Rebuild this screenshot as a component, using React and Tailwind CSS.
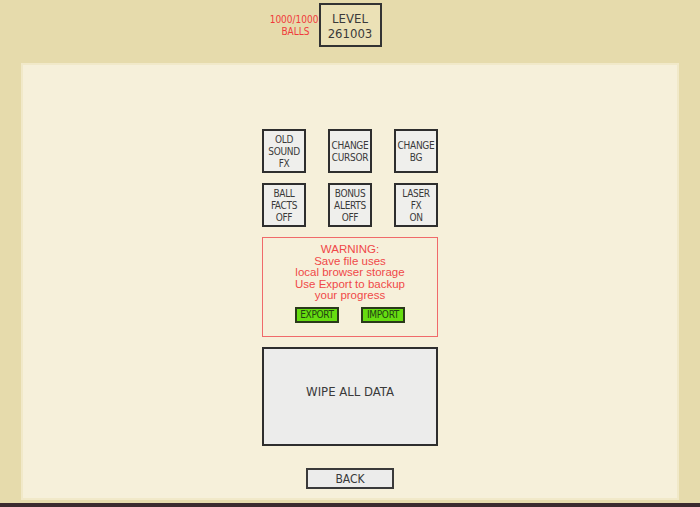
import React from "react";

const pix = { fontFamily: '"Liberation Sans Narrow", "DejaVu Sans Condensed", "Liberation Sans", sans-serif' };

function Opt({ lines }) {
  return (
    <div className="w-[44px] h-[44px] border-2 border-[#2e2e2e] bg-[#efefec] flex flex-col items-center justify-center pt-[2px] text-[10px] leading-[12px] text-[#3a3a3a] uppercase tracking-[-0.3px]" style={pix}>
      {lines.map((l, i) => (
        <span key={i}>{l}</span>
      ))}
    </div>
  );
}

export default function App() {
  return (
    <div className="w-[700px] h-[507px] bg-[#e6dbac] flex flex-col overflow-hidden">
      <div className="h-[63px] flex items-start pt-[3px]">
        <div className="flex-1 flex justify-end pt-[11px]">
          <div className="text-[#f03a3a] text-[10px] leading-[12px] text-right flex flex-col items-end" style={pix}>
            <span>1000/1000</span>
            <span className="pr-[9px]">BALLS</span>
          </div>
        </div>
        <div className="w-[63px] h-[44px] border-2 border-[#333] bg-[#ebe1b6] flex flex-col items-center justify-center pt-[1px] text-[#3a3a3a] text-[13px] leading-[15px]" style={pix}>
          <span>LEVEL</span>
          <span>261003</span>
        </div>
        <div className="flex-1" />
      </div>
      <div className="mx-[21px] h-[437px] bg-[#f6f0da] border-2 border-[#f1e9c9] flex flex-col items-center pt-[64px]">
        <div className="grid grid-cols-[44px_44px_44px] gap-x-[22px] gap-y-[10px]">
          <Opt lines={["OLD", "SOUND", "FX"]} />
          <Opt lines={["CHANGE", "CURSOR"]} />
          <Opt lines={["CHANGE", "BG"]} />
          <Opt lines={["BALL", "FACTS", "OFF"]} />
          <Opt lines={["BONUS", "ALERTS", "OFF"]} />
          <Opt lines={["LASER", "FX", "ON"]} />
        </div>
        <div className="mt-[10px] w-[176px] h-[100px] border border-[#f06a6a] flex flex-col items-center pt-[6px]">
          <div className="text-[#f04848] text-[11.5px] leading-[11.6px] text-center" style={{ fontFamily: '"Liberation Sans", Arial, sans-serif' }}>
            <div>WARNING:</div>
            <div>Save file uses</div>
            <div>local browser storage</div>
            <div>Use Export to backup</div>
            <div>your progress</div>
          </div>
          <div className="flex gap-[22px] mt-[5px]">
            <div className="w-[44px] h-[16px] bg-[#66dd11] border-2 border-[#2a3a1a] flex items-center justify-center text-[10px] leading-none text-[#224411] tracking-[-0.3px]" style={pix}>EXPORT</div>
            <div className="w-[44px] h-[16px] bg-[#66dd11] border-2 border-[#2a3a1a] flex items-center justify-center text-[10px] leading-none text-[#224411] tracking-[-0.3px]" style={pix}>IMPORT</div>
          </div>
        </div>
        <div className="mt-[10px] w-[176px] h-[99px] bg-[#ececeb] border-2 border-[#2e2e2e] flex items-center justify-center pb-[10px] text-[13px] text-[#3a3a3a]" style={pix}>
          WIPE ALL DATA
        </div>
        <div className="mt-[22px] w-[88px] h-[21px] bg-[#ececeb] border-2 border-[#3a3a3a] flex items-center justify-center text-[12px] text-[#3a3a3a]" style={pix}>
          BACK
        </div>
      </div>
      <div className="h-[3px]" />
      <div className="flex-1 bg-[#3b2a2f]" />
    </div>
  );
}
